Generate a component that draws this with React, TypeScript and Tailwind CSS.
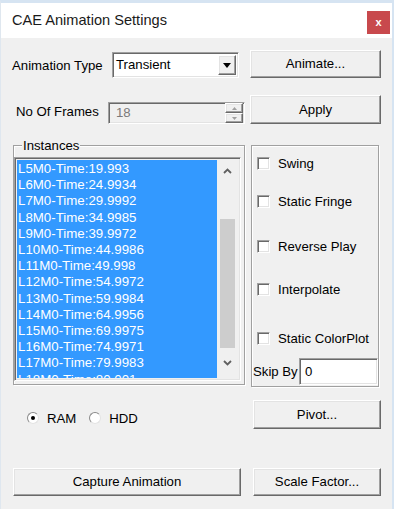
import React from "react";

const font = { fontFamily: '"Liberation Sans", Arial, sans-serif' };

const btn =
  "bg-[#f0f0f0] border border-t-white border-l-white border-r-[#696969] border-b-[#696969] shadow-[inset_-1px_-1px_0_#a0a0a0,inset_1px_1px_0_#e3e3e3] text-[13.2px] text-black flex items-center justify-center";
const sunken =
  "border border-t-[#a0a0a0] border-l-[#a0a0a0] border-b-white border-r-white shadow-[inset_1px_1px_0_#696969,inset_-1px_-1px_0_#e3e3e3]";
const group =
  "border border-[#a0a0a0] shadow-[1px_1px_0_#fff,inset_1px_1px_0_#fff]";

const instances = [
  "L5M0-Time:19.993",
  "L6M0-Time:24.9934",
  "L7M0-Time:29.9992",
  "L8M0-Time:34.9985",
  "L9M0-Time:39.9972",
  "L10M0-Time:44.9986",
  "L11M0-Time:49.998",
  "L12M0-Time:54.9972",
  "L13M0-Time:59.9984",
  "L14M0-Time:64.9956",
  "L15M0-Time:69.9975",
  "L16M0-Time:74.9971",
  "L17M0-Time:79.9983",
  "L18M0-Time:80.001",
];

const options = [
  { label: "Swing", mt: "mt-[11px]" },
  { label: "Static Fringe", mt: "mt-[25px]" },
  { label: "Reverse Play", mt: "mt-[32px]" },
  { label: "Interpolate", mt: "mt-[30px]" },
  { label: "Static ColorPlot", mt: "mt-[36px]" },
];

function Chevron({ up }: { up?: boolean }) {
  return (
    <svg width="9" height="6" viewBox="0 0 9 6">
      <polyline
        points={up ? "1,5 4.5,1.5 8,5" : "1,1 4.5,4.5 8,1"}
        fill="none"
        stroke="#606060"
        strokeWidth="1.8"
      />
    </svg>
  );
}

function Radio({ checked, label }: { checked?: boolean; label: string }) {
  return (
    <div className="flex items-center">
      <div className="w-[12px] h-[12px] rounded-full bg-white border border-t-[#8a8a8a] border-l-[#8a8a8a] border-b-[#e3e3e3] border-r-[#e3e3e3] flex items-center justify-center">
        {checked && <div className="w-[4px] h-[4px] rounded-full bg-black" />}
      </div>
      <span className="ml-[8px] text-[13.2px]">{label}</span>
    </div>
  );
}

export default function App() {
  return (
    <div
      style={font}
      className="w-[394px] h-[509px] bg-[#f0f0f0] border-t-[3px] border-t-[#d6e4f2] border-l border-l-[#dfe7ef] border-r-2 border-r-[#d6e4f2] overflow-hidden text-black"
    >
      <div className="h-[35px] bg-white flex items-center justify-between pl-[11px] pr-[2px]">
        <span className="text-[14.6px] text-[#1a1a1a] mt-[1px]">CAE Animation Settings</span>
        <div className="w-[23px] h-[23px] mt-[3px] bg-[#c8494d] flex items-center justify-center text-white text-[11px] font-bold leading-none">
          x
        </div>
      </div>

      <div className="pl-[11px] pr-[11px]">
        {/* row 1 */}
        <div className="mt-[12px] h-[28px] flex items-center">
          <span className="w-[100px] text-[13.2px] mt-[3px]">Animation Type</span>
          <div className={`w-[127px] h-[26px] mt-[2px] bg-white flex items-center ${sunken}`}>
            <span className="ml-[3px] text-[13.2px] flex-1">Transient</span>
            <div className={`w-[18px] h-[20px] mr-[2px] ${btn}`}>
              <svg width="8" height="5" viewBox="0 0 8 5">
                <polygon points="0,0 8,0 4,5" fill="#000" />
              </svg>
            </div>
          </div>
          <div className={`ml-[11px] w-[131px] h-[28px] ${btn}`}>Animate...</div>
        </div>

        {/* row 2 */}
        <div className="mt-[17px] h-[29px] flex items-center">
          <span className="w-[96px] pl-[4px] text-[13.2px] mt-[4px]">No Of Frames</span>
          <div className={`w-[137px] h-[22px] self-end flex items-center bg-[#f0f0f0] ${sunken}`}>
            <span className="ml-[7px] text-[13.2px] text-[#7a7a7a] flex-1">18</span>
            <div className="w-[18px] h-full flex flex-col mr-[1px]">
              <div className={`flex-1 ${btn}`}>
                <svg width="5" height="3" viewBox="0 0 5 3">
                  <polygon points="0,3 5,3 2.5,0" fill="#a0a0a0" />
                </svg>
              </div>
              <div className={`flex-1 ${btn}`}>
                <svg width="5" height="3" viewBox="0 0 5 3">
                  <polygon points="0,0 5,0 2.5,3" fill="#a0a0a0" />
                </svg>
              </div>
            </div>
          </div>
          <div className={`ml-[5px] w-[131px] h-[29px] ${btn}`}>Apply</div>
        </div>

        {/* group boxes */}
        <div className="mt-[21px] flex items-start">
          <div className={`relative ml-[1px] w-[232px] h-[240px] ${group}`}>
            <span className="absolute -top-[8px] left-[8px] px-[1px] bg-[#f0f0f0] text-[13.2px] leading-[16px]">
              Instances
            </span>
            <div className={`mt-[11px] w-[227px] h-[224px] flex ${sunken} p-[2px]`}>
              <div className="w-[200px] h-full bg-[#3399ff] overflow-hidden pt-[1px]">
                {instances.map((t) => (
                  <div key={t} className="pl-[1px] text-white text-[13.3px] leading-[16.2px] whitespace-nowrap">
                    {t}
                  </div>
                ))}
              </div>
              <div className="flex-1 h-full flex flex-col bg-[#f0f0f0]">
                <div className="h-[22px] flex items-center justify-center">
                  <Chevron up />
                </div>
                <div className="h-[37px]" />
                <div className="h-[129px] mx-[3px] bg-[#cdcdcd]" />
                <div className="flex-1 flex items-center justify-center">
                  <Chevron />
                </div>
              </div>
            </div>
          </div>

          <div className={`ml-[6px] w-[128px] h-[242px] flex flex-col ${group}`}>
            {options.map((o) => (
              <div key={o.label} className={`${o.mt} h-[13px] flex items-center pl-[5px]`}>
                <div className={`w-[13px] h-[13px] bg-white ${sunken}`} />
                <span className="ml-[8px] text-[13.2px]">{o.label}</span>
              </div>
            ))}
            <div className="mt-[13px] h-[27px] flex items-center">
              <span className="pl-[1px] text-[13.2px]">Skip By</span>
              <div className={`ml-auto w-[79px] h-[27px] bg-white flex items-center ${sunken}`}>
                <span className="ml-[5px] text-[13.2px]">0</span>
              </div>
            </div>
          </div>
        </div>

        {/* row 4 */}
        <div className="mt-[13px] flex items-start">
          <div className="ml-[15px] mt-[8px] h-[21px] flex items-center gap-[13px]">
            <Radio checked label="RAM" />
            <Radio label="HDD" />
          </div>
          <div className={`ml-auto w-[128px] h-[29px] ${btn}`}>Pivot...</div>
        </div>

        {/* row 5 */}
        <div className="mt-[39px] flex">
          <div className={`ml-[1px] w-[228px] h-[28px] ${btn}`}>Capture Animation</div>
          <div className={`ml-auto w-[128px] h-[28px] ${btn}`}>Scale Factor...</div>
        </div>
      </div>
    </div>
  );
}
